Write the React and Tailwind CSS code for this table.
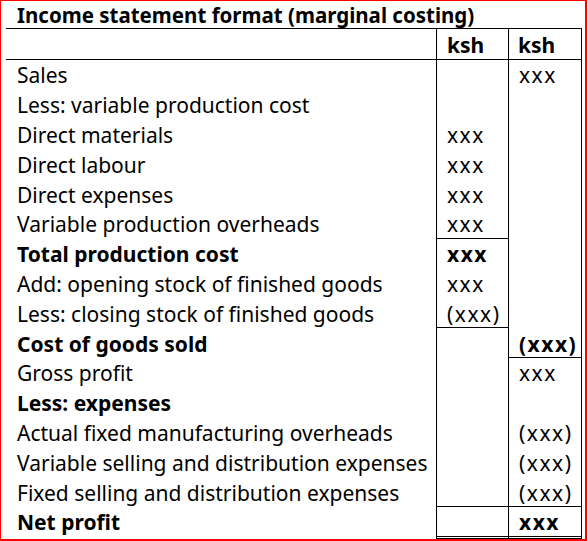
import React from 'react';

// Marginal costing income statement — layout of three columns: label, ksh, ksh
const labels = [
  { t: 'Sales' },
  { t: 'Less: variable production cost' },
  { t: 'Direct materials' },
  { t: 'Direct labour' },
  { t: 'Direct expenses' },
  { t: 'Variable production overheads' },
  { t: 'Total production cost', b: true },
  { t: 'Add: opening stock of finished goods' },
  { t: 'Less: closing stock of finished goods' },
  { t: 'Cost of goods sold', b: true },
  { t: 'Gross profit' },
  { t: 'Less: expenses', b: true },
  { t: 'Actual fixed manufacturing overheads' },
  { t: 'Variable selling and distribution expenses' },
  { t: 'Fixed selling and distribution expenses' },
  { t: 'Net profit', b: true },
];

// boxes per value column, each box is a bordered group of rows
const col2 = [
  { h: 'h-[178.8px]', rows: [{}, {}, { t: 'xxx' }, { t: 'xxx' }, { t: 'xxx' }, { t: 'xxx' }] },
  { h: 'h-[89.4px]', rows: [{ t: 'xxx', b: true }, { t: 'xxx' }, { t: '(xxx)' }] },
  { h: 'h-[178.8px]', rows: [{}, {}, {}, {}, {}, {}] },
  { h: 'h-[32px]', rows: [{}], last: true },
];

const col3 = [
  {
    h: 'h-[298px]',
    rows: [{ t: 'xxx' }, {}, {}, {}, {}, {}, {}, {}, {}, { t: '(xxx)', b: true }],
  },
  { h: 'h-[149px]', rows: [{ t: 'xxx' }, {}, { t: '(xxx)' }, { t: '(xxx)' }, { t: '(xxx)' }] },
  { h: 'h-[32px]', rows: [{ t: 'xxx', b: true }], last: true },
];

const Row = ({ item }) => (
  <div className={`h-[29.8px] shrink-0 flex items-center pt-[2px] pl-[10px] whitespace-nowrap ${item.b ? 'font-bold' : ''}`}>
    {item.t || ''}
  </div>
);

const ValueColumn = ({ boxes, className }) => (
  <div className={`flex flex-col tracking-[1.5px] ${className}`}>
    {boxes.map((box, i) => (
      <div
        key={i}
        className={`${box.h} overflow-hidden flex flex-col border-black ${
          box.last ? 'border-b-[3px] border-double' : 'border-b'
        }`}
      >
        {box.rows.map((r, j) => (
          <Row key={j} item={r} />
        ))}
      </div>
    ))}
  </div>
);

export default function App() {
  return (
    <div className="w-[587px] h-[541px] bg-white border-t border-l border-r-2 border-b-2 border-[#ff0000] overflow-hidden font-['Noto_Sans','DejaVu_Sans',sans-serif] text-[21px] text-black leading-none">
      <div className="ml-[5px] w-[576px]">
        <div className="h-[27px] flex items-center pl-[11px] pt-[2px] font-bold text-[20.5px] whitespace-nowrap">
          Income statement format (marginal costing)
        </div>

        {/* header */}
        <div className="flex border-t border-b border-black h-[32px]">
          <div className="w-[430px]"></div>
          <div className="w-[72px] border-l border-black flex items-center pl-[10px] pt-[3px] font-bold">ksh</div>
          <div className="w-[74px] border-l border-r border-black flex items-center pl-[9px] pt-[3px] font-bold">ksh</div>
        </div>

        {/* body */}
        <div className="flex">
          <div className="w-[430px] flex flex-col pl-[1px]">
            {labels.map((l, i) => (
              <Row key={i} item={l} />
            ))}
          </div>
          <ValueColumn boxes={col2} className="w-[72px] border-l border-black" />
          <ValueColumn boxes={col3} className="w-[74px] border-l border-r border-black" />
        </div>
      </div>
    </div>
  );
}
